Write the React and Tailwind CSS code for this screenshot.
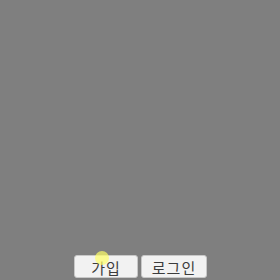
export default function App() {
  return (
    <div className="relative w-[280px] h-[280px] bg-[#7f7f7f] flex flex-col justify-end items-center overflow-hidden" style={{ fontFamily: '"Noto Sans CJK KR", "Noto Sans", sans-serif' }}>
      <div className="flex gap-[3px] mb-[2px] ml-[1px]">
        <button className="w-[64px] h-[23px] bg-[#f2f2f2] border border-[#c8c8c8] rounded-[3px] text-[15px] leading-none text-[#3c3c3c] tracking-[1px] flex items-center justify-center pt-[1px]">
          가입
        </button>
        <button className="w-[66px] h-[23px] bg-[#f2f2f2] border border-[#c8c8c8] rounded-[3px] text-[15px] leading-none text-[#3c3c3c] tracking-[1px] flex items-center justify-center pt-[1px]">
          로그인
        </button>
      </div>
      <div className="absolute left-[95px] top-[251px] w-[14px] h-[14px] rounded-full bg-[#ffff66]/70" />
    </div>
  );
}
